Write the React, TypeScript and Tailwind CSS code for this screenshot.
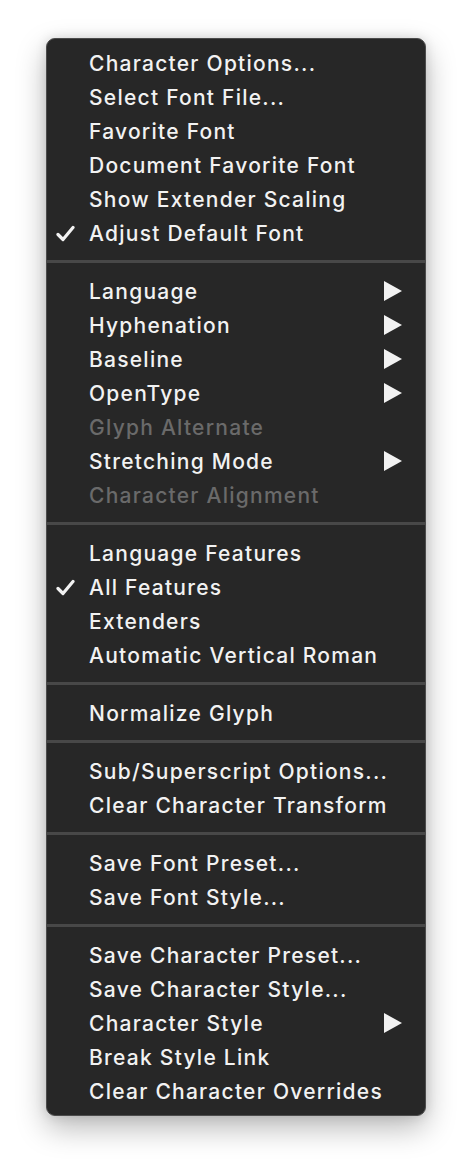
import React from "react";

type Item = { label: string; checked?: boolean; sub?: boolean; disabled?: boolean };

const sections: Item[][] = [
  [
    { label: "Character Options..." },
    { label: "Select Font File..." },
    { label: "Favorite Font" },
    { label: "Document Favorite Font" },
    { label: "Show Extender Scaling" },
    { label: "Adjust Default Font", checked: true },
  ],
  [
    { label: "Language", sub: true },
    { label: "Hyphenation", sub: true },
    { label: "Baseline", sub: true },
    { label: "OpenType", sub: true },
    { label: "Glyph Alternate", disabled: true },
    { label: "Stretching Mode", sub: true },
    { label: "Character Alignment", disabled: true },
  ],
  [
    { label: "Language Features" },
    { label: "All Features", checked: true },
    { label: "Extenders" },
    { label: "Automatic Vertical Roman" },
  ],
  [{ label: "Normalize Glyph" }],
  [{ label: "Sub/Superscript Options..." }, { label: "Clear Character Transform" }],
  [{ label: "Save Font Preset..." }, { label: "Save Font Style..." }],
  [
    { label: "Save Character Preset..." },
    { label: "Save Character Style..." },
    { label: "Character Style", sub: true },
    { label: "Break Style Link" },
    { label: "Clear Character Overrides" },
  ],
];

function Check() {
  return (
    <svg width="19" height="17" viewBox="0 0 19 17" className="block">
      <path d="M2 9.5 L7 14.5 L17 2.5" fill="none" stroke="#f2f2f2" strokeWidth="3.2" strokeLinecap="round" strokeLinejoin="round" />
    </svg>
  );
}

function Arrow() {
  return (
    <svg width="18" height="20" viewBox="0 0 18 20" className="block">
      <polygon points="0,0 18,10 0,20" fill="#f2f2f2" />
    </svg>
  );
}

function Row({ item }: { item: Item }) {
  return (
    <div className="relative flex h-[34px] items-center">
      {item.checked && (
        <div className="absolute left-[9px] top-[9px]">
          <Check />
        </div>
      )}
      <span
        className={`pl-[42px] pt-[1px] text-[21px] font-medium leading-none tracking-[1.25px] whitespace-nowrap ${
          item.disabled ? "text-[#6a6a6a]" : "text-[#f2f2f2]"
        }`}
      >
        {item.label}
      </span>
      {item.sub && (
        <div className="absolute right-[23px] top-[7px]">
          <Arrow />
        </div>
      )}
    </div>
  );
}

export default function App() {
  return (
    <div className="min-h-[1170px] w-[472px] bg-white pl-[46px] pt-[38px]" style={{ fontFamily: "Inter, 'Noto Sans', sans-serif" }}>
      <div className="w-[380px] rounded-[9px] border border-[#4c4c4c] bg-[#272727] py-[7px] shadow-[0_12px_30px_rgba(0,0,0,0.28),0_0_12px_rgba(0,0,0,0.12)]">
        {sections.map((sec, i) => (
          <div key={i}>
            {i > 0 && <div className="mt-[10px] mb-[11px] h-[3px] bg-[#484848]" />}
            {sec.map((it) => (
              <Row key={it.label} item={it} />
            ))}
          </div>
        ))}
      </div>
    </div>
  );
}
